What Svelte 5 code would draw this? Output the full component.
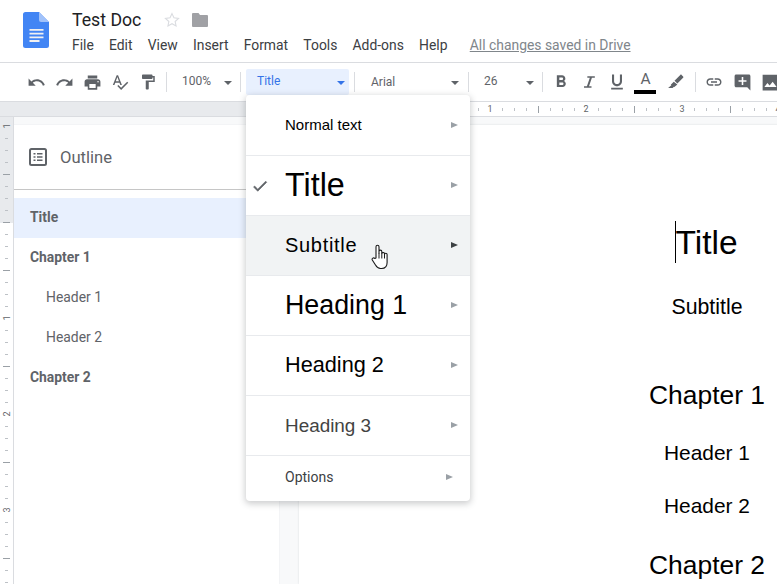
<script>
  const paths = {
    undo: 'M12.5 8c-2.65 0-5.05.99-6.9 2.6L2 7v9h9l-3.62-3.62c1.39-1.16 3.16-1.88 5.12-1.88 3.54 0 6.55 2.31 7.6 5.5l2.37-.78C21.08 11.03 17.15 8 12.5 8z',
    redo: 'M18.4 10.6C16.55 8.99 14.15 8 11.5 8c-4.65 0-8.58 3.03-9.96 7.22L3.9 16c1.05-3.19 4.05-5.5 7.6-5.5 1.95 0 3.73.72 5.12 1.88L13 16h9V7l-3.6 3.6z',
    print: 'M19 8H5c-1.66 0-3 1.34-3 3v6h4v4h12v-4h4v-6c0-1.66-1.34-3-3-3zm-3 11H8v-5h8v5zm3-7c-.55 0-1-.45-1-1s.45-1 1-1 1 .45 1 1-.45 1-1 1zm-1-9H6v4h12V3z',
    spell: 'M12.45 16h2.09L9.43 3H7.57L2.46 16h2.09l1.12-3h5.64l1.14 3zm-6.02-5L8.5 5.48 10.57 11H6.43zm15.16.59l-8.09 8.09L9.83 16l-1.41 1.41 5.09 5.09L23 13l-1.41-1.41z',
    paint: 'M18 4V3c0-.55-.45-1-1-1H5c-.55 0-1 .45-1 1v4c0 .55.45 1 1 1h12c.55 0 1-.45 1-1V6h1v4H9v11c0 .55.45 1 1 1h2c.55 0 1-.45 1-1v-9h8V4h-3z',
    bold: 'M15.6 10.79c.97-.67 1.65-1.77 1.65-2.79 0-2.26-1.75-4-4-4H7v14h7.04c2.09 0 3.71-1.7 3.71-3.79 0-1.52-.86-2.82-2.15-3.42zM10 6.5h3c.83 0 1.5.67 1.5 1.5s-.67 1.5-1.5 1.5h-3v-3zm3.5 9H10v-3h3.5c.83 0 1.5.67 1.5 1.5s-.67 1.5-1.5 1.5z',
    italic: 'M10 5v2h3l-3.500 10H6v2h9v-2h-3l3.500-10H19V5z',
    underline: 'M12 17c3.31 0 6-2.69 6-6V3h-2.5v8c0 1.93-1.57 3.5-3.5 3.5S8.5 12.93 8.5 11V3H6v8c0 3.31 2.69 6 6 6zm-7 2v2h14v-2H5z',
    pen: 'M19.5 2.500c-.5-.5-1.300-.5-1.800 0L10 10.200l3.800 3.800 7.700-7.700c.5-.5.5-1.300 0-1.800l-2-2zM9 11.500l-4 4 .8.8L1.500 20h6l1.700-1.700.6.5 4-3.500L9 11.500z',
    link: 'M3.9 12c0-1.71 1.39-3.1 3.1-3.1h4V7H7c-2.76 0-5 2.24-5 5s2.24 5 5 5h4v-1.9H7c-1.71 0-3.1-1.39-3.1-3.1zM8 13h8v-2H8v2zm9-6h-4v1.9h4c1.71 0 3.1 1.39 3.1 3.1s-1.39 3.1-3.1 3.1h-4V17h4c2.76 0 5-2.24 5-5s-2.24-5-5-5z',
    comment: 'M20 2H4c-1.1 0-2 .9-2 2v12c0 1.1.9 2 2 2h14l4 4V4c0-1.1-.9-2-2-2zm-3 9h-4v4h-2v-4H7V9h4V5h2v4h4v2z',
    image: 'M3 3h18v18H3V3zm2 14h14l-4.500-6-3.500 4.500-2.500-3L5 17z'
  };
  const menus = ['File', 'Edit', 'View', 'Insert', 'Format', 'Tools', 'Add-ons', 'Help'];
  const hTicks = Array.from({ length: 27 }, (_, i) => i + 7);
  const vTicks = Array.from({ length: 40 }, (_, i) => i);
  const styles = [
    { label: 'Normal text', cls: 'normal' },
    { label: 'Title', cls: 'title', check: true },
    { label: 'Subtitle', cls: 'subtitle', hover: true },
    { label: 'Heading 1', cls: 'h1' },
    { label: 'Heading 2', cls: 'h2' },
    { label: 'Heading 3', cls: 'h3' },
    { label: 'Options', cls: 'options' }
  ];
  const outline = [
    { label: 'Title', cls: 'bold active' },
    { label: 'Chapter 1', cls: 'bold' },
    { label: 'Header 1', cls: 'sub' },
    { label: 'Header 2', cls: 'sub' },
    { label: 'Chapter 2', cls: 'bold' }
  ];
</script>

{#snippet icon(d, size = 18)}
  <svg class="icon" width={size} height={size} viewBox="0 0 24 24"><path {d} fill="currentColor" fill-rule="evenodd" /></svg>
{/snippet}

<div class="app">
  <header class="header">
    <svg class="logo" width="26" height="36" viewBox="0 0 26 36">
      <path d="M2.500 0H16l10 10v23.500a2.500 2.500 0 0 1-2.500 2.500h-21A2.500 2.500 0 0 1 0 33.500V2.500A2.500 2.500 0 0 1 2.500 0z" fill="#4285f4" />
      <path d="M16 0l10 10H18a2 2 0 0 1-2-2z" fill="#a1c2fa" />
      <path d="M6.500 17h14v1.800h-14zM6.500 20.700h14v1.800h-14zM6.500 24.400h14v1.800h-14zM6.500 28.100h10v1.800h-10z" fill="#f1f1f1" />
    </svg>
    <div class="doc">
      <div class="doc-top">
        <span class="doc-title">Test Doc</span>
        <svg class="star" width="18" height="18" viewBox="0 0 24 24"><path d="M12 3.500l2.600 5.600 6.100.7-4.500 4.200 1.200 6-5.400-3-5.400 3 1.200-6-4.500-4.200 6.100-.7z" fill="none" stroke="#dadce0" stroke-width="1.500" /></svg>
        <svg class="folder" width="16" height="14" viewBox="0 0 16 14"><path d="M1 0h5.500L8 2h7a1 1 0 0 1 1 1v10a1 1 0 0 1-1 1H1a1 1 0 0 1-1-1V1a1 1 0 0 1 1-1z" fill="#a0a1a5" /></svg>
      </div>
      <nav class="menus">
        {#each menus as m}<span>{m}</span>{/each}
        <span class="saved">All changes saved in Drive</span>
      </nav>
    </div>
  </header>

  <div class="toolbar">
    <div class="tb w-28">{@render icon(paths.undo, 19)}</div>
    <div class="tb w-28">{@render icon(paths.redo, 19)}</div>
    <div class="tb w-28">{@render icon(paths.print, 19)}</div>
    <div class="tb w-28">{@render icon(paths.spell)}</div>
    <div class="tb w-28">{@render icon(paths.paint)}</div>
    <div class="sep s-first"></div>
    <div class="select zoom"><span>100%</span><i class="caret"></i></div>
    <div class="sep"></div>
    <div class="select style"><span>Title</span><i class="caret"></i></div>
    <div class="sep"></div>
    <div class="select font"><span>Arial</span><i class="caret"></i></div>
    <div class="sep"></div>
    <div class="select size"><span>26</span><i class="caret"></i></div>
    <div class="sep"></div>
    <div class="tb w-b">{@render icon(paths.bold, 20)}</div>
    <div class="tb w-28">{@render icon(paths.italic, 20)}</div>
    <div class="tb w-28">{@render icon(paths.underline, 20)}</div>
    <div class="tb w-28 color"><span class="color-a">A</span><i class="color-bar"></i></div>
    <div class="tb w-34">{@render icon(paths.pen)}</div>
    <div class="sep s-last"></div>
    <div class="tb w-28">{@render icon(paths.link, 18)}</div>
    <div class="tb w-28">{@render icon(paths.comment, 19)}</div>
    <div class="tb w-28">{@render icon(paths.image, 21)}</div>
  </div>

  <div class="hruler">
    <div class="hruler-white">
      {#each hTicks as i}
        <div class="hcell">
          {#if i % 8 === 0}
            <span class="num">{i / 8}</span>
          {:else if i % 8 === 4}
            <i class="tick major"></i>
          {:else}
            <i class="tick"></i>
          {/if}
        </div>
      {/each}
    </div>
  </div>

  <div class="workspace">
    <div class="vruler">
      <div class="v-grey"></div>
      <div class="v-ticks">
        {#each vTicks as i}
          <div class="vcell">
            {#if i === 0 || i === 16 || i === 24 || i === 32}
              <span class="vnum">{i === 0 ? 1 : i / 8 - 1}</span>
            {:else if i % 4 === 0}
              <i class="vtick major"></i>
            {:else}
              <i class="vtick"></i>
            {/if}
          </div>
        {/each}
      </div>
    </div>
    <div class="canvas">
      <div class="topband"></div>
      <div class="columns">
        <aside class="outline">
          <div class="outline-head">
            <svg width="18" height="18" viewBox="0 0 18 18"><rect x="1" y="1" width="16" height="16" rx="1.500" fill="none" stroke="#5f6368" stroke-width="2" /><path d="M4.500 5h2v1.600h-2zM8 5h5.500v1.600H8zM4.500 8.200h2v1.600h-2zM8 8.200h5.500v1.600H8zM4.500 11.400h2V13h-2zM8 11.400h5.500V13H8z" fill="#5f6368" /></svg>
            <span>Outline</span>
          </div>
          <div class="outline-list">
            {#each outline as o}
              <div class={'oitem ' + o.cls}>{o.label}</div>
            {/each}
          </div>
        </aside>
        <div class="gutter"></div>
        <main class="page">
          <div class="p-title"><span class="caretline"></span>Title</div>
          <div class="p-subtitle">Subtitle</div>
          <div class="p-chapter first">Chapter 1</div>
          <div class="p-header h-a">Header 1</div>
          <div class="p-header h-b">Header 2</div>
          <div class="p-chapter second">Chapter 2</div>
        </main>
      </div>
    </div>
  </div>

  <div class="dropdown">
    {#each styles as s}
      <div class={'mrow ' + s.cls} class:hover={s.hover}>
        {#if s.check}
          <svg class="check" width="18" height="18" viewBox="0 0 24 24"><path d="M9 16.200L4.800 12l-1.400 1.400L9 19 21 7l-1.400-1.400z" fill="#5f6368" stroke="#5f6368" stroke-width="0.800" /></svg>
        {/if}
        <span class="mlabel">{s.label}</span>
        <i class="arrow"></i>
      </div>
    {/each}
    <svg class="hand" width="19" height="26" viewBox="0 0 19 26">
      <path d="M5 14V2.800a1.500 1.500 0 0 1 3 0V9.500V7.500a1.400 1.400 0 0 1 2.800 0v2a1.400 1.400 0 0 1 2.700 0v1a1.300 1.300 0 0 1 2.600 0v8c0 3.500-2 6-5.500 6H9.500c-2.500 0-3.800-1.500-5-3.500L1.300 16c-.8-1.500 1.300-3 2.500-1.500z" fill="#fff" stroke="#1a1a1a" stroke-width="1.100" stroke-linejoin="round" />
      <path d="M8 9.500v5M10.800 9.500v5M13.500 10.500v4" stroke="#1a1a1a" stroke-width="1" fill="none" />
    </svg>
  </div>
</div>

<style>
  :global(body) { margin: 0; background: #fff; }
  .app {
    position: relative;
    width: 777px;
    height: 584px;
    overflow: hidden;
    display: flex;
    flex-direction: column;
    font-family: Roboto, sans-serif;
    color: #3c4043;
    background: #fff;
  }
  .header {
    height: 62px;
    flex: none;
    display: flex;
    border-bottom: 1px solid #dadce0;
    padding-left: 23px;
  }
  .logo { margin-top: 12px; flex: none; }
  .doc { margin-left: 23px; }
  .doc-top { display: flex; align-items: center; height: 26px; margin-top: 7px; }
  .doc-title { font-size: 17.700px; color: #202124; width: 91px; flex: none; }
  .star { margin-right: 11px; }
  .menus { display: flex; gap: 15.200px; font-size: 13.900px; color: #3c4043; line-height: 24px; }
  .saved { color: #80868b; text-decoration: underline; margin-left: 7px; }
  .toolbar {
    height: 38px;
    flex: none;
    display: flex;
    align-items: center;
    border-bottom: 1px solid #dadce0;
    color: #5f6368;
    padding-left: 22px;
  }
  .tb { display: flex; align-items: center; justify-content: center; height: 26px; flex: none; }
  .w-28 { width: 28px; }
  .w-34 { width: 34px; }
  .w-b { width: 28px; margin-left: -1px; }
  .icon { display: block; }
  .sep { width: 1px; height: 20px; background: #dadce0; flex: none; margin: 0 5px; }
  .s-first { margin-left: 4px; margin-right: 0; }
  .s-last { margin-left: 2px; margin-right: 4px; }
  .select { display: flex; align-items: center; height: 26px; font-size: 12px; flex: none; position: relative; box-sizing: border-box; }
  .select span { margin-top: -2px; }
  .font span { margin-top: 0; }
  .caret { position: absolute; top: 12px; width: 0; height: 0; border: 4px solid transparent; border-top-color: #5f6368; border-bottom: 0; }
  .zoom { width: 68px; padding-left: 15px; }
  .zoom .caret { right: 3px; }
  .style { width: 103px; padding-left: 11px; background: #e8f0fe; color: #3574e8; border-radius: 2px; }
  .style .caret { right: 4px; border-top-color: #3574e8; }
  .font { width: 104px; padding-left: 12px; margin-left: -1px; }
  .font .caret { right: 4px; }
  .size { width: 63px; padding-left: 10px; }
  .size .caret { right: 3px; }
  .color { position: relative; }
  .color-a { font-size: 15.500px; color: #5f6368; line-height: 18px; margin-top: -6px; margin-left: 1px; }
  .color-bar { position: absolute; left: 3px; bottom: 1px; width: 22px; height: 4px; background: #000; }
  .hruler {
    height: 14px;
    flex: none;
    background: #e8eaed;
    border-bottom: 1px solid #dadce0;
    padding-left: 298px;
    overflow: hidden;
  }
  .hruler-white { display: flex; background: #fff; height: 14px; padding-left: 174px; overflow: hidden; }
  .hcell { width: 12px; flex: none; height: 14px; display: flex; align-items: center; justify-content: center; }
  .num { font-size: 9px; color: #5f6368; line-height: 14px; }
  .tick { display: block; width: 1px; height: 3px; background: #bdc1c6; }
  .tick.major { height: 7px; background: #9aa0a6; }
  .workspace { flex: 1; display: flex; min-height: 0; }
  .vruler { width: 13px; flex: none; position: relative; border-right: 1px solid #dadce0; background: #fff; overflow: hidden; }
  .v-grey { position: absolute; left: 0; right: 0; top: 0; height: 106px; background: #e8eaed; }
  .v-ticks { position: relative; padding-top: 3px; }
  .vcell { height: 12px; display: flex; align-items: center; justify-content: center; }
  .vnum { font-size: 9px; color: #5f6368; transform: rotate(-90deg); line-height: 12px; display: block; }
  .vtick { display: block; width: 3px; height: 1px; background: #bdc1c6; }
  .vtick.major { width: 7px; background: #9aa0a6; }
  .canvas { flex: 1; display: flex; flex-direction: column; min-width: 0; background: #f8f9fa; }
  .topband { height: 8px; flex: none; }
  .columns { flex: 1; display: flex; min-height: 0; }
  .outline { width: 265px; flex: none; background: #fff; box-shadow: 0 0 1px #dadce0; }
  .outline-head {
    height: 65px;
    box-sizing: border-box;
    display: flex;
    align-items: center;
    gap: 13px;
    padding-left: 15px;
    border-bottom: 1px solid #c6c6c6;
    font-size: 16.600px;
    color: #5f6368;
  }
  .outline-list { padding-top: 8px; }
  .oitem { height: 40px; line-height: 38px; font-size: 13.900px; padding-left: 16px; color: #5f6368; }
  .oitem.bold { font-weight: 700; }
  .oitem.sub { padding-left: 32px; }
  .oitem.active { background: #e8f0fe; }
  .gutter { width: 20px; flex: none; }
  .page { width: 816px; flex: none; background: #fff; box-shadow: 0 0 2px #dadce0; color: #000; font-family: "Liberation Sans", Arial, sans-serif; text-align: center; line-height: 1; }
  .p-title { font-size: 33.500px; margin-top: 96px; }
  .caretline { display: inline-block; width: 1px; height: 42px; background: #000; vertical-align: -9px; margin: 0 -1px 0 -1px; }
  .p-subtitle { font-size: 21.300px; margin-top: 34px; }
  .p-chapter { font-size: 26.400px; }
  .p-chapter.first { margin-top: 64px; }
  .p-chapter.second { margin-top: 35px; }
  .p-header { font-size: 20.900px; }
  .h-a { margin-top: 34px; }
  .h-b { margin-top: 32px; }
  .dropdown {
    position: absolute;
    left: 246px;
    top: 95px;
    width: 224px;
    background: #fff;
    border-radius: 4px;
    box-shadow: 0 2px 6px 1px rgba(60, 64, 67, 0.25);
    font-family: "Liberation Sans", Arial, sans-serif;
    color: #000;
  }
  .mrow {
    height: 60px;
    box-sizing: border-box;
    display: flex;
    align-items: center;
    padding-left: 39px;
    position: relative;
    border-bottom: 1px solid #e8eaed;
  }
  .mrow.normal { height: 61px; padding-bottom: 2px; }
  .mrow.hover { background: #f1f3f4; }
  .mrow.h2 { padding-bottom: 2px; }
  .mrow.options { height: 45px; border-bottom: 0; font-family: Roboto, sans-serif; padding-bottom: 3px; }
  .check { position: absolute; left: 5px; top: 21px; }
  .normal .mlabel { font-size: 15px; }
  .title .mlabel { font-size: 32.300px; }
  .subtitle .mlabel { font-size: 20px; letter-spacing: 0.7px; }
  .h1 .mlabel { font-size: 26.800px; }
  .h2 .mlabel { font-size: 21.700px; }
  .h3 .mlabel { font-size: 18.900px; color: #434343; }
  .options .mlabel { font-size: 14px; color: #3c4043; }
  .arrow { position: absolute; right: 12px; top: 26px; width: 0; height: 0; border: 3.500px solid transparent; border-left: 7px solid #9aa0a6; border-right: 0; }
  .normal .arrow { top: 27px; }
  .hover .arrow { border-left-color: #3c4043; }
  .options .arrow { top: 18px; right: 17px; }
  .hand { position: absolute; left: 125px; top: 149px; }
</style>
